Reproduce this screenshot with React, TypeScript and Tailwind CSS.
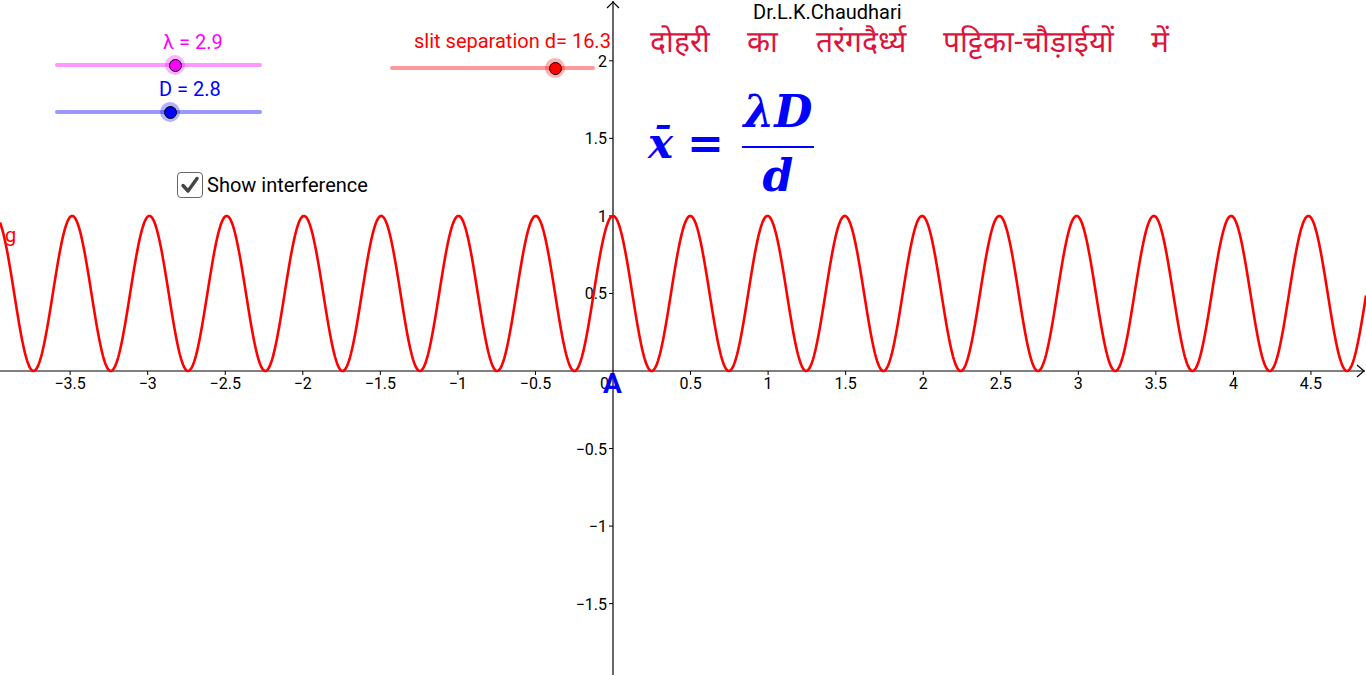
import React from "react";

const U = 155.1;
const OX = 613;
const OY = 371;
const BETA = (2.9 * 2.8) / 16.3;

function curvePath() {
  const pts: string[] = [];
  for (let px = 0; px <= 1366; px += 1) {
    const x = (px - OX) / U;
    const c = Math.cos((Math.PI * x) / BETA);
    const py = OY - c * c * U;
    pts.push(`${px === 0 ? "M" : "L"}${px},${py.toFixed(2)}`);
  }
  return pts.join(" ");
}

const fmt = (v: number) => (v < 0 ? "\u2212" + String(-v) : String(v));

function Graph() {
  const xs: number[] = [];
  for (let k = -7; k <= 9; k++) if (k !== 0) xs.push(k / 2);
  const ys = [2, 1.5, 1, 0.5, -0.5, -1, -1.5];
  return (
    <svg width="1366" height="675" className="absolute inset-0" style={{ fontFamily: "Roboto, sans-serif" }}>
      {/* axes */}
      <line x1="0" y1={OY} x2="1365" y2={OY} stroke="#000" strokeWidth="1.2" />
      <line x1={OX} y1="1" x2={OX} y2="675" stroke="#000" strokeWidth="1.2" />
      <polyline points="1357,365 1364,371 1357,377" fill="none" stroke="#000" strokeWidth="1.2" />
      <polyline points="607,8 613,2 619,8" fill="none" stroke="#000" strokeWidth="1.2" />
      {xs.map((v) => {
        const px = OX + v * U;
        return (
          <g key={"x" + v}>
            <line x1={px} y1={OY} x2={px} y2={OY + 4} stroke="#000" strokeWidth="1" />
            <text x={px} y={OY + 18} fontSize="16" textAnchor="middle" fill="#000">
              {fmt(v)}
            </text>
          </g>
        );
      })}
      <text x={OX - 4} y={OY + 18} fontSize="16" textAnchor="end" fill="#000">
        0
      </text>
      {ys.map((v) => {
        const py = OY - v * U;
        return (
          <g key={"y" + v}>
            <line x1={OX - 4} y1={py} x2={OX} y2={py} stroke="#000" strokeWidth="1" />
            <text x={OX - 6} y={py + 6} fontSize="16" textAnchor="end" fill="#000">
              {fmt(v)}
            </text>
          </g>
        );
      })}
      {/* interference pattern */}
      <path d={curvePath()} fill="none" stroke="#ff0000" strokeWidth="2.6" strokeLinejoin="round" />
    </svg>
  );
}

function Slider({
  left,
  top,
  width,
  pos,
  track,
  halo,
  fill,
}: {
  left: number;
  top: number;
  width: number;
  pos: number;
  track: string;
  halo: string;
  fill: string;
}) {
  return (
    <div className="absolute" style={{ left, top, width, height: 0 }}>
      <div className="absolute left-0 right-0 -top-[2px] h-[4px] rounded-full" style={{ background: track }} />
      <div
        className="absolute w-[20px] h-[20px] -top-[10px] rounded-full"
        style={{ left: pos - 10, background: halo }}
      />
      <div
        className="absolute w-[13px] h-[13px] -top-[6.5px] rounded-full border border-black"
        style={{ left: pos - 6.5, background: fill }}
      />
    </div>
  );
}

export default function App() {
  return (
    <div className="relative w-[1366px] h-[675px] bg-white overflow-hidden font-['Roboto',sans-serif]">
      <Graph />

      <div className="absolute left-[5px] top-[225px] text-[20px] leading-none text-[#ff0000]">g</div>

      <div className="absolute left-[603px] top-[370px] text-[28px] leading-none font-bold text-[#0000ff]">A</div>

      {/* sliders */}
      <div className="absolute left-[163px] top-[32px] text-[20px] leading-none text-[#ff00ff]">λ = 2.9</div>
      <Slider left={55} top={65} width={207} pos={120} track="#ff99ff" halo="rgba(255,0,255,0.3)" fill="#ff00ff" />

      <div className="absolute left-[159px] top-[79px] text-[20px] leading-none text-[#0000ff]">D = 2.8</div>
      <Slider left={55} top={112} width={207} pos={115} track="#9999ff" halo="rgba(0,0,255,0.3)" fill="#0000ff" />

      <div className="absolute left-[414px] top-[31px] text-[20px] leading-none text-[#ff0000] whitespace-nowrap">
        slit separation d= 16.3
      </div>
      <Slider left={390} top={68} width={205} pos={165} track="#ff9999" halo="rgba(255,0,0,0.3)" fill="#ff0000" />

      {/* checkbox */}
      <div className="absolute left-[177px] top-[172px] flex items-center gap-[4px]">
        <div className="w-[26px] h-[26px] rounded-[4px] border-[1.5px] border-[#666] bg-white flex items-center justify-center">
          <svg width="20" height="20" viewBox="0 0 20 20">
            <path d="M3 10.5 L8 16 L17 3.5" fill="none" stroke="#444" strokeWidth="3.4" strokeLinecap="round" strokeLinejoin="round" />
          </svg>
        </div>
        <span className="text-[20px] leading-none text-black">Show interference</span>
      </div>

      <div className="absolute left-[753px] top-[2px] text-[20px] leading-none text-black">Dr.L.K.Chaudhari</div>

      <div className="absolute left-[650px] top-[27px] text-[30px] leading-none text-[#dc143c] whitespace-nowrap [word-spacing:30px]">
        दोहरी का तरंगदैर्ध्य पट्टिका-चौड़ाईयों में
      </div>

      {/* formula */}
      <div className="absolute left-[648px] top-[90px] flex items-center text-[#0000ff] font-['DejaVu_Serif',serif] font-bold">
        <span className="italic text-[42px] leading-none">x̄</span>
        <span className="text-[44px] leading-none ml-[14px] mr-[18px]">=</span>
        <div className="flex flex-col items-center">
          <span className="italic text-[44px] leading-none">λD</span>
          <div className="w-[72px] h-[2px] bg-[#0000ff] mt-[12px] mb-[6px]" />
          <span className="italic text-[44px] leading-none">d</span>
        </div>
      </div>
    </div>
  );
}
